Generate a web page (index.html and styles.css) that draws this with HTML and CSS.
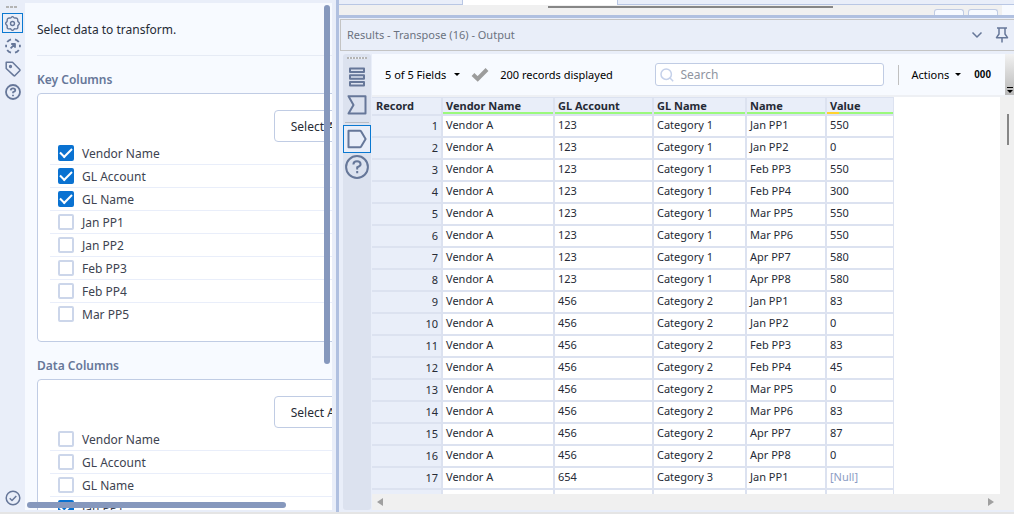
FILE: index.html
```html
<!DOCTYPE html>
<html lang="en">
<head>
<meta charset="utf-8">
<title>Results - Transpose (16) - Output</title>
<link rel="stylesheet" href="styles.css">
</head>
<body>
<div class="app">
  <section class="config">
    <nav class="rail" aria-label="Configuration">
      <div class="grip grip-left"></div>
      <button class="rail-btn selected" aria-label="Settings">
        <svg width="15" height="15" viewBox="0 0 16 16" class="ico"><path d="M6.500 1.800Q8 -.4 9.500 1.800Q10 2.500 10.900 2.200Q13.700 1.800 13.600 4.700Q13.500 5.700 14.200 6.300Q16.500 8 14.200 9.700Q13.500 10.300 13.700 11.200Q14 14 11 13.700Q10 13.500 9.500 14.300Q8 16.400 6.500 14.300Q6 13.500 5 13.700Q2 14 2.300 11.200Q2.500 10.300 1.800 9.700Q-.5 8 1.800 6.300Q2.500 5.700 2.300 4.700Q2.300 1.800 5.100 2.200Q6 2.500 6.500 1.800Z"/><circle cx="8" cy="8" r="2.100"/></svg>
      </button>
      <button class="rail-btn" aria-label="Connections">
        <svg width="16" height="16" viewBox="0 0 16 16" class="ico heavy"><path d="M2.200 4A7 7 0 0 1 6 1.300M10 1.300A7 7 0 0 1 13.800 4M14.900 6.800V9.200M13.800 12A7 7 0 0 1 10 14.700M6 14.700A7 7 0 0 1 2.200 12M1.100 9.200V6.800"/><path d="M5.600 10.400L9.800 6.200M6.200 6H10V9.800"/></svg>
      </button>
      <button class="rail-btn" aria-label="Annotation">
        <svg width="16" height="16" viewBox="0 0 16 16" class="ico"><path d="M1.200 1.200H7.500L14.700 8.600Q15.200 9.200 14.700 9.800L10 14.600Q9.400 15.100 8.800 14.600L1.200 7.500Z"/><circle cx="5.500" cy="5.500" r=".9"/></svg>
      </button>
      <button class="rail-btn" aria-label="Help">
        <svg width="16" height="16" viewBox="0 0 16 16" class="ico heavy"><circle cx="8" cy="8" r="7"/><path d="M5.700 6.400Q5.800 4.300 8 4.300T10.300 6.200Q10.300 7.500 8.100 8.100V9.300M8 10.700V12.200"/></svg>
      </button>
      <button class="rail-btn rail-end" aria-label="Status">
        <svg width="16" height="16" viewBox="0 0 16 16" class="ico"><circle cx="8" cy="8" r="6.800"/><path d="M4.700 8.300L7 10.500L11.300 6"/></svg>
      </button>
    </nav>
    <div class="panel">
      <div class="panel-body">
        <p class="intro">Select data to transform.</p>
        <h2 class="group-title">Key Columns</h2>
        <fieldset class="group" aria-label="Key Columns">
          <button class="select-all">Select All</button>
          <label class="opt"><input type="checkbox" checked>Vendor Name</label>
          <label class="opt"><input type="checkbox" checked>GL Account</label>
          <label class="opt"><input type="checkbox" checked>GL Name</label>
          <label class="opt"><input type="checkbox">Jan PP1</label>
          <label class="opt"><input type="checkbox">Jan PP2</label>
          <label class="opt"><input type="checkbox">Feb PP3</label>
          <label class="opt"><input type="checkbox">Feb PP4</label>
          <label class="opt"><input type="checkbox">Mar PP5</label>
        </fieldset>
        <h2 class="group-title">Data Columns</h2>
        <fieldset class="group" aria-label="Data Columns">
          <button class="select-all">Select All</button>
          <label class="opt"><input type="checkbox">Vendor Name</label>
          <label class="opt"><input type="checkbox">GL Account</label>
          <label class="opt"><input type="checkbox">GL Name</label>
          <label class="opt"><input type="checkbox" checked>Jan PP1</label>
        </fieldset>
      </div>
      <div class="thumb thumb-y"></div>
      <div class="thumb thumb-x"></div>
    </div>
  </section>

  <main class="main">
    <div class="canvas-edge">
      <div class="tabs"><span class="tab tab-first"></span><span class="tab-open"></span><span class="tab tab-rest"></span></div>
      <div class="canvas-foot"><span class="canvas-scroll"></span><span class="stub"></span><span class="stub"></span><span class="corner"></span></div>
    </div>
    <header class="title">
      <h1>Results - Transpose (16) - Output</h1>
      <button aria-label="Collapse"><svg width="12" height="8" viewBox="0 0 12 8" class="ico"><path d="M1.500 1.500L6 6L10.500 1.500"/></svg></button>
      <button aria-label="Pin"><svg width="14" height="16" viewBox="0 0 14 16" class="ico"><path d="M2 1H12M4 1V7L1.500 10.700H12.500L10 7V1M7 11V15.500"/></svg></button>
    </header>
    <div class="results">
      <nav class="tools" aria-label="Results views">
        <div class="grip"></div>
        <button aria-label="Messages"><svg width="20" height="20" viewBox="0 0 20 20" class="ico big"><path d="M3 1.500H17V5H3ZM3 8.300H17V11.800H3ZM3 15H17V18.500H3Z"/></svg></button>
        <button aria-label="Input"><svg width="20" height="20" viewBox="0 0 20 20" class="ico big"><path d="M1.500 1.200H18.500V18.600H1.500L6.500 10Z"/></svg></button>
        <hr>
        <button class="selected" aria-label="Output"><svg width="20" height="20" viewBox="0 0 20 20" class="ico big"><path d="M1.500 1.700H13Q13.600 1.700 14 2.300L18.600 10L14 17.700Q13.600 18.300 13 18.300H1.500Z"/></svg></button>
        <button aria-label="Help"><svg width="24" height="24" viewBox="0 0 24 24" class="ico big"><circle cx="12" cy="12" r="10.900"/><path d="M8.400 9.500Q8.500 6.300 12 6.300T15.600 9.300Q15.600 11.200 12.200 12.300V14.500M12.200 15.900V18.300"/></svg></button>
      </nav>
      <div class="output">
        <div class="bar">
          <div class="bar-main">
            <button class="fields">5 of 5 Fields <i class="caret"></i></button>
            <svg class="tick" width="18" height="14" viewBox="0 0 18 14"><path d="M2 6.500L6.700 11L16 1.500" fill="none" stroke="#9c9c9c" stroke-width="4"/></svg>
            <span class="count">200 records displayed</span>
            <label class="search">
              <svg width="14" height="14" viewBox="0 0 14 14" fill="none" stroke="#c5d1ea" stroke-width="1.500"><circle cx="6.200" cy="6.200" r="5.200"/><path d="M10 10L13.200 13.200"/></svg>
              <input type="text" placeholder="Search" aria-label="Search">
            </label>
            <span class="rule"></span>
            <button class="actions">Actions <i class="caret"></i></button>
            <button class="more">000</button>
          </div>
          <button class="overflow" aria-label="More tools"><svg width="6" height="6" viewBox="0 0 6 6"><path d="M0 0H6V1H0ZM0 3H6L3 6Z"/></svg></button>
        </div>
        <div class="grid-area">
          <div class="grid-view">
            <table>
              <colgroup><col class="c-rec"><col class="c-vendor"><col class="c-acct"><col class="c-gl"><col class="c-name"><col class="c-val"></colgroup>
              <thead><tr><th>Record</th><th>Vendor Name</th><th>GL Account</th><th>GL Name</th><th>Name</th><th class="partial">Value</th></tr></thead>
              <tbody>
                <tr><td>1</td><td>Vendor A</td><td>123</td><td>Category 1</td><td>Jan PP1</td><td>550</td></tr>
                <tr><td>2</td><td>Vendor A</td><td>123</td><td>Category 1</td><td>Jan PP2</td><td>0</td></tr>
                <tr><td>3</td><td>Vendor A</td><td>123</td><td>Category 1</td><td>Feb PP3</td><td>550</td></tr>
                <tr><td>4</td><td>Vendor A</td><td>123</td><td>Category 1</td><td>Feb PP4</td><td>300</td></tr>
                <tr><td>5</td><td>Vendor A</td><td>123</td><td>Category 1</td><td>Mar PP5</td><td>550</td></tr>
                <tr><td>6</td><td>Vendor A</td><td>123</td><td>Category 1</td><td>Mar PP6</td><td>550</td></tr>
                <tr><td>7</td><td>Vendor A</td><td>123</td><td>Category 1</td><td>Apr PP7</td><td>580</td></tr>
                <tr><td>8</td><td>Vendor A</td><td>123</td><td>Category 1</td><td>Apr PP8</td><td>580</td></tr>
                <tr><td>9</td><td>Vendor A</td><td>456</td><td>Category 2</td><td>Jan PP1</td><td>83</td></tr>
                <tr><td>10</td><td>Vendor A</td><td>456</td><td>Category 2</td><td>Jan PP2</td><td>0</td></tr>
                <tr><td>11</td><td>Vendor A</td><td>456</td><td>Category 2</td><td>Feb PP3</td><td>83</td></tr>
                <tr><td>12</td><td>Vendor A</td><td>456</td><td>Category 2</td><td>Feb PP4</td><td>45</td></tr>
                <tr><td>13</td><td>Vendor A</td><td>456</td><td>Category 2</td><td>Mar PP5</td><td>0</td></tr>
                <tr><td>14</td><td>Vendor A</td><td>456</td><td>Category 2</td><td>Mar PP6</td><td>83</td></tr>
                <tr><td>15</td><td>Vendor A</td><td>456</td><td>Category 2</td><td>Apr PP7</td><td>87</td></tr>
                <tr><td>16</td><td>Vendor A</td><td>456</td><td>Category 2</td><td>Apr PP8</td><td>0</td></tr>
                <tr><td>17</td><td>Vendor A</td><td>654</td><td>Category 3</td><td>Jan PP1</td><td class="null">[Null]</td></tr>
                <tr><td></td><td></td><td></td><td></td><td></td><td></td></tr>
              </tbody>
            </table>
          </div>
          <div class="vscroll"><span></span></div>
        </div>
        <div class="hscroll">
          <svg width="6" height="8" viewBox="0 0 6 8"><path d="M6 0V8L0 4Z"/></svg>
          <svg width="6" height="8" viewBox="0 0 6 8"><path d="M0 0V8L6 4Z"/></svg>
        </div>
      </div>
    </div>
  </main>
</div>
</body>
</html>
```
FILE: styles.css
```css
* { box-sizing: border-box; }
body { margin: 0; font-family: "Noto Sans", "Open Sans", sans-serif; font-size: 11px; color: #262b36; }
button { font: inherit; color: inherit; background: none; border: 0; padding: 0; margin: 0; white-space: nowrap; }
h1, h2, p { margin: 0; font-weight: 400; }
svg { display: block; }
.ico { fill: none; stroke: #667799; stroke-width: 1.5; stroke-linejoin: round; }
.heavy { stroke-width: 1.8; }
.big { stroke-width: 2; }

.app { display: flex; height: 100vh; background: #e9eef9; border-bottom: 2px solid #e5e5e5; }

.config { flex: 0 0 339px; min-width: 0; display: flex; padding: 3px 4px 2px 0; border-right: 3px solid #b0c0e0; }
.rail { width: 25px; flex: none; display: flex; flex-direction: column; align-items: flex-start; gap: 3px; padding: 0 0 4px 2px; }
.rail-btn { width: 21px; height: 20px; display: grid; place-items: center; }
.rail-btn.selected { border: 1px solid #0a78d1; }
.rail-end { margin-top: auto; height: 16px; }
.grip { width: 20px; height: 2px; flex: none; background: repeating-linear-gradient(90deg, #b4b4b4 0 2px, #e9eef9 2px 3px); }
.grip-left { width: 11px; margin: 3px 0 2px 4px; background: repeating-linear-gradient(90deg, #b4b4b4 0 3px, #e9eef9 3px 4px); }

.panel { position: relative; flex: 1; min-width: 0; overflow: hidden; background: #f7faff; }
.panel-body { width: 358px; padding: 0 12px; font-size: 12px; }
.intro { height: 53px; line-height: 53px; border-bottom: 1px solid #e6ebf5; }
.group-title { height: 37px; padding-top: 16px; line-height: 16px; font-size: 12px; font-weight: 600; color: #667799; }
.group { display: flex; flex-direction: column; margin: 0; padding: 16px 12px 15px; border: 1px solid #c0cce4; border-radius: 4px; background: #fff; min-width: 0; }
.group .opt:last-child { border-bottom-color: #fff; }
.select-all { align-self: flex-end; height: 32px; padding: 0 16px; border: 1px solid #c0cce4; border-radius: 4px; }
.opt { display: flex; align-items: center; gap: 8px; height: 23px; padding-left: 8px; border-bottom: 1px solid #e9eefa; color: #3d4350; }
.opt input { appearance: none; width: 16px; height: 16px; margin: 0; border: 2px solid #ccd6ea; border-radius: 2px; background: #fff; }
.opt input:checked { border-color: #0a72d1; background: #0a72d1; display: grid; place-items: center; }
.opt input:checked::before { content: ""; width: 10px; height: 5px; margin-bottom: 3px; border: solid #fff; border-width: 0 0 2px 2px; transform: rotate(-45deg); }
.thumb { position: absolute; border-radius: 3px; background: #8698bd; }
.thumb-y { top: 2px; right: 2px; width: 6px; height: 359px; }
.thumb-x { left: 2px; bottom: 2px; width: 259px; height: 6px; }

.main { flex: 1; min-width: 0; display: flex; flex-direction: column; }
.canvas-edge { flex: none; background: #f0f0f0; border-bottom: 3px solid #b0c0e0; }
.tabs { display: flex; height: 5px; }
.tab { background: #e9eef9; border-bottom: 1px solid #b9c7e4; }
.tab-first { width: 124px; border-right: 1px solid #b9c7e4; }
.tab-open { width: 154px; background: #fff; }
.tab-rest { flex: 1; border-left: 1px solid #b9c7e4; }
.canvas-foot { display: flex; height: 10px; gap: 4px; }
.canvas-scroll { width: 285px; height: 2px; margin: 1px auto 0 209px; background: #868686; }
.stub { width: 30px; margin-top: 4px; border: 1px solid #c0cce4; border-bottom: 0; border-radius: 3px 3px 0 0; background: #f7faff; }
.corner { width: 12px; background: #f7faff; }

.title { flex: none; display: flex; align-items: center; gap: 12px; height: 32px; margin: 1px 0 3px 1px; padding: 0 5px 1px 6px; border: 1px solid #c4c4c4; border-right: 0; color: #6b7280; }
.title h1 { font-size: 11px; margin-right: auto; }

.results { flex: 1; min-height: 0; display: flex; padding: 0 0 2px 4px; }
.tools { width: 28px; flex: none; display: flex; flex-direction: column; align-items: center; padding-top: 3px; background: #dce2ef; border-radius: 3px; }
.tools button { width: 28px; height: 28px; display: grid; place-items: center; }
.tools .selected { border: 1px solid #0a78d1; background: #e9eef9; }
.tools hr { width: 24px; margin: 3px 0 2px; border: 0; border-top: 1px solid #b9bdc6; }
.tools .grip { margin-bottom: 4px; background: repeating-linear-gradient(90deg, #b4b4b4 0 2px, #eef1f7 2px 3px); }

.output { flex: 1; min-width: 0; display: flex; flex-direction: column; margin-left: 1px; }
.bar { flex: none; display: flex; height: 43px; background: #f7faff; border-bottom: 2px solid #eef0f4; color: #000; }
.bar-main { flex: 1; min-width: 0; display: flex; align-items: center; padding: 0 14px 0 13px; white-space: nowrap; }
.fields, .actions { display: flex; align-items: center; gap: 8px; }
.actions { gap: 6px; }
.caret { border: 3px solid transparent; border-top-color: #000; border-bottom: 0; }
.tick { margin: 0 11px; flex: none; }
.count { margin-right: auto; }
.search { display: flex; align-items: center; gap: 6px; width: 229px; height: 23px; padding: 0 4px; border: 1px solid #c0cce4; border-radius: 3px; background: #fff; }
.search input { flex: 1; min-width: 0; padding: 0; border: 0; outline: 0; font: inherit; font-size: 12px; background: none; }
.search input::placeholder { color: #8f959f; opacity: 1; }
.rule { width: 1px; height: 20px; margin: 0 12px 0 14px; background: #c0c0c0; }
.more { margin-left: 13px; font: bold 10px "Liberation Sans", sans-serif; }
.overflow { width: 9px; display: grid; align-items: end; justify-items: center; padding-bottom: 2px; background: linear-gradient(#f2f2f2, #b8b8b8); }

.grid-area { flex: 1; min-height: 0; display: flex; background: #fff; }
.grid-view { flex: 1; min-width: 0; overflow: hidden; }
table { width: 522px; table-layout: fixed; border-collapse: separate; border-spacing: 0; border-top: 1px solid #dce2f0; }
.c-rec { width: 71px; }
.c-vendor { width: 112px; }
.c-acct { width: 99px; }
.c-gl { width: 93px; }
.c-name { width: 80px; }
.c-val { width: 67px; }
th, td { padding: 0 3px; text-align: left; white-space: nowrap; border: solid #dce2f0; border-width: 0 2px 2px 0; }
th:last-child, td:last-child { border-right-width: 1px; }
th { height: 18px; line-height: 16px; font-weight: 700; background: #e9eef9; box-shadow: inset 0 -2px #9bf97c; }
th.partial { background: linear-gradient(90deg, #ffd22e 12px, #9bf97c 12px) bottom / 100% 2px no-repeat #e9eef9; background-origin: padding-box; background-clip: padding-box; box-shadow: none; }
th:first-child { padding-left: 4px; box-shadow: none; }
td { height: 22px; padding-bottom: 2px; line-height: 18px; background: #fff; }
td:first-child { padding-bottom: 0; line-height: 20px; text-align: right; background: #e9eef9; }
td.null { color: #8c9cc4; }
.vscroll { width: 14px; padding: 17px 0 0 7px; background: #f0f0f0; }
.vscroll span { display: block; width: 2px; height: 31px; background: #868686; }
.hscroll { flex: none; display: flex; align-items: center; justify-content: space-between; height: 16px; padding: 0 20px 0 5px; background: #f0f0f0; fill: #a0a0a0; }
```
